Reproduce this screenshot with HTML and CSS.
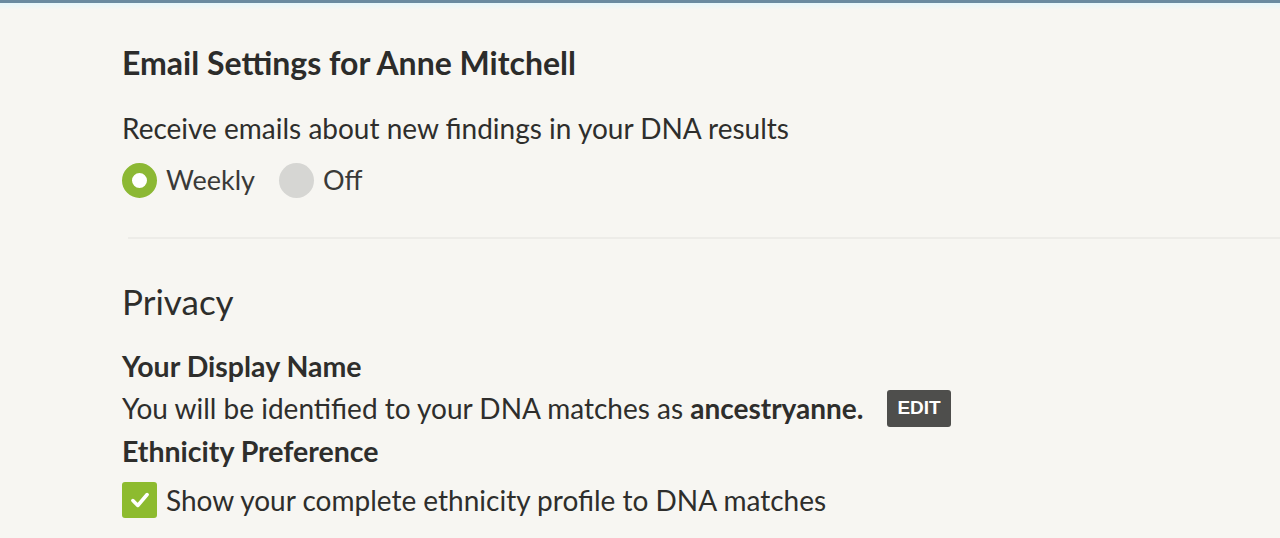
FILE: index.html
```html
<!DOCTYPE html>
<html lang="en">
<head>
  <meta charset="UTF-8" />
  <meta name="viewport" content="width=device-width, initial-scale=1.0"/>
  <title>DNA Settings</title>
  <link rel="stylesheet" href="styles.css">
</head>
<body>
  <div class="topbar"></div>

  <div class="page">
    <section class="email-settings">
      <h2>Email Settings for Anne Mitchell</h2>
      <p class="desc">Receive emails about new findings in your DNA results</p>
      <div class="radios">
        <label class="radio checked"><span class="dot"></span>Weekly</label>
        <label class="radio"><span class="dot"></span>Off</label>
      </div>
    </section>

    <hr class="divider">

    <section class="privacy">
      <h1>Privacy</h1>
      <h3 class="first">Your Display Name</h3>
      <p class="identified">You will be identified to your DNA matches as <b>ancestryanne.</b> <button class="edit-btn">EDIT</button></p>
      <h3>Ethnicity Preference</h3>
      <label class="check">
        <span class="box">
          <svg viewBox="0 0 20 20" width="22" height="22"><path d="M3.5 10.5 L8 15 L16.5 5" fill="none" stroke="#fff" stroke-width="3.2" stroke-linecap="round" stroke-linejoin="round"/></svg>
        </span>
        Show your complete ethnicity profile to DNA matches
      </label>
    </section>
  </div>
</body>
</html>
```

FILE: styles.css
```css
body {
  margin: 0;
  font-family: Lato, 'Noto Sans', sans-serif;
  background: #f7f6f2;
  color: #2e2e2c;
  height: 100vh;
  overflow: hidden;
}

.topbar {
  height: 7px;
  border-top: 3px solid #6a8aa0;
  background: linear-gradient(#e4f6fb, #f7f6f2);
}

.page {
  padding-left: 122px;
}

.email-settings h2 {
  margin: 0;
  padding-top: 37px;
  font-size: 32px;
  line-height: 32px;
  font-weight: 700;
  color: #2c2c2a;
}

.desc {
  margin: 32px 0 0;
  font-size: 28px;
  line-height: 34px;
}

.radios {
  display: flex;
  align-items: center;
  gap: 24px;
  margin-top: 17px;
}

.radio {
  display: flex;
  align-items: center;
  gap: 9px;
  font-size: 27px;
  line-height: 36px;
  color: #3a3a38;
}

.radio .dot {
  width: 35px;
  height: 35px;
  border-radius: 50%;
  background: #d6d6d3;
  box-sizing: border-box;
}

.radio.checked .dot {
  background: #fff;
  border: 10px solid #8cb834;
}

.divider {
  margin: 39px 0 0 6px;
  border: none;
  border-top: 2px solid #edece8;
}

.privacy h1 {
  margin: 42px 0 0;
  font-size: 35px;
  line-height: 40px;
  font-weight: 400;
}

.privacy h3 {
  margin: 1px 0 0;
  font-size: 28.5px;
  line-height: 42px;
  font-weight: 700;
}

.privacy h3.first {
  margin-top: 24px;
}

.identified {
  margin: 0;
  font-size: 28px;
  line-height: 42px;
  display: flex;
  align-items: center;
  white-space: pre;
}

.identified b {
  font-weight: 700;
}

.edit-btn {
  margin-left: 24px;
  height: 37px;
  padding: 0 10px;
  border: none;
  border-radius: 3px;
  background: #4e4e4c;
  color: #fff;
  font-family: 'Liberation Sans Narrow', 'Liberation Sans', sans-serif;
  font-weight: 700;
  font-size: 19px;
}

.check {
  display: flex;
  align-items: center;
  gap: 9px;
  margin-top: 10px;
  font-size: 28px;
  line-height: 36px;
}

.check .box {
  width: 35px;
  height: 36px;
  border-radius: 3px;
  background: #8dbb2f;
  display: flex;
  align-items: center;
  justify-content: center;
}
```
